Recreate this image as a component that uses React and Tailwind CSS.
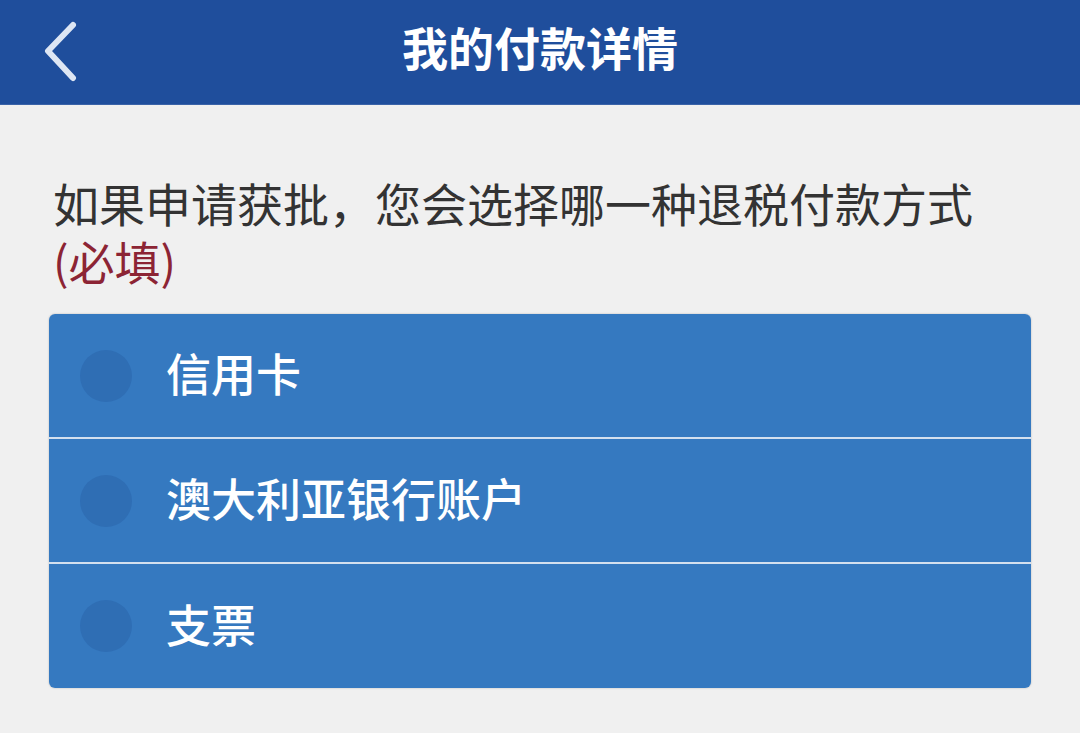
const options = ["信用卡", "澳大利亚银行账户", "支票"];

const cjk = { fontFamily: '"Noto Sans CJK SC", "Noto Sans", sans-serif' };

function BackButton() {
  return (
    <button className="flex h-[104px] w-[104px] items-center pl-[40px]">
      <svg width="42" height="62" viewBox="0 0 42 62" fill="none">
        <path
          d="M33 4 L8 30 L33 57"
          stroke="#dde6f4"
          strokeWidth="6"
          strokeLinecap="round"
          strokeLinejoin="round"
        />
      </svg>
    </button>
  );
}

function OptionRow({ label, last }) {
  return (
    <label
      className={`flex items-center bg-[#3579c0] ${
        last ? "h-[124px]" : "h-[125px] border-b-2 border-[#d3e0ef]"
      }`}
    >
      <span className="ml-[31px] h-[52px] w-[52px] shrink-0 rounded-full bg-[#2f6eb4]" />
      <span className="ml-[34px] pb-[6px] text-[45px] font-medium leading-none text-white">
        {label}
      </span>
    </label>
  );
}

export default function App() {
  return (
    <div className="h-[733px] w-[1080px] overflow-hidden bg-[#f0f0f0]" style={cjk}>
      <header className="relative flex h-[105px] items-center justify-center border-b border-[#3a63a8] bg-[#1f4e9c] pb-[12px]">
        <div className="absolute left-0 top-0">
          <BackButton />
        </div>
        <h1 className="text-[46px] font-bold leading-none text-white">我的付款详情</h1>
      </header>

      <main className="px-[49px] pt-[68px]">
        <p className="pl-[4px] text-[46px] leading-[58px] text-[#333333]">
          如果申请获批，您会选择哪一种退税付款方式
          <br />
          <span className="text-[#8c2434]">(必填)</span>
        </p>

        <div className="mt-[25px] overflow-hidden rounded-[6px] shadow-[0_0_2px_rgba(0,0,0,0.25)]">
          {options.map((o, i) => (
            <OptionRow key={o} label={o} last={i === options.length - 1} />
          ))}
        </div>
      </main>
    </div>
  );
}
